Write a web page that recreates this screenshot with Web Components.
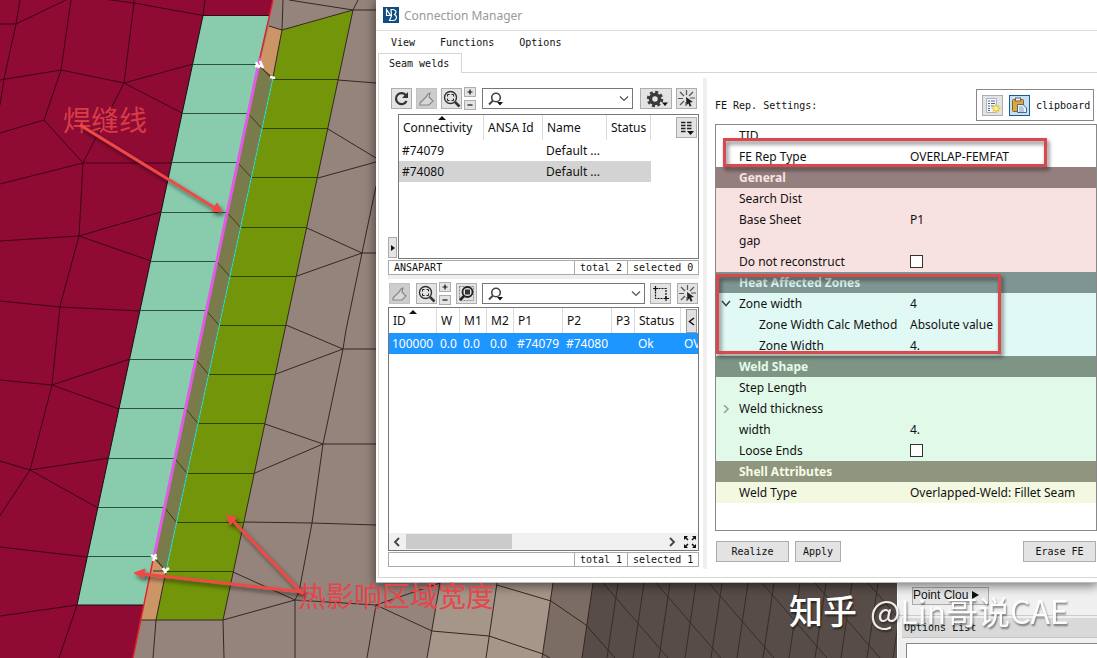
<!DOCTYPE html>
<html lang="en">
<head>
<meta charset="utf-8">
<title>Connection Manager</title>
<style>
html,body{height:100%}
body{margin:0;overflow:hidden;background:#94847b;font-family:"Noto Sans","Noto Sans CJK SC",sans-serif;font-size:12px;color:#111}
</style>
</head>
<body>
<app-desktop></app-desktop>

<template id="t-desktop">
<style>
:host{display:block;position:relative;height:100%;overflow:hidden}
mesh-view{position:absolute;inset:0}
side-panel{position:absolute;left:897px;right:0;bottom:0;height:80px}
connection-window{position:absolute;left:376px;right:0;top:0;bottom:75px}
weld-notes{position:absolute;inset:0;pointer-events:none}
water-mark{position:absolute;left:789px;bottom:24px}
</style>
<mesh-view></mesh-view>
<side-panel></side-panel>
<connection-window></connection-window>
<weld-notes></weld-notes>
<water-mark></water-mark>
</template>

<template id="t-mesh">
<style>:host{display:block}svg{display:block;width:100%;height:100%}</style>
<svg viewBox="0 0 1097 658" preserveAspectRatio="xMinYMin slice" aria-hidden="true">
<rect width="1097" height="658" fill="#94847b"/>
<path fill="#8f0b34" d="M0 0H273L133 658H0Z"/>
<path fill="#a69589" d="M440 583H553L542 658H427Z"/>
<path fill="#7b6c64" d="M553 583H593L582 658H542Z"/>
<path fill="#574c47" d="M593 583H900V658H582Z"/>
<path fill="#89ccad" d="M203 15.500H269.500L144 605H77Z"/>
<path fill="#7a7b4b" d="M259 65L273 78L166 571L153 557Z"/>
<path fill="#cb9566" d="M269 26L282 30L273 77L259 66ZM153 558L166 571L156 620H140.500Z"/>
<path fill="#73950a" d="M282 30L353 10L223 620H156L273 78Z"/>
<path fill="none" stroke="#3c0418" d="M20 0L16 24L4 79L0 105M0 24H16L70-2M71 0L61 70L44 120L83 163M134 3L124 83L83 163M134 0V3M88-3L134 3L203 15.500H269M205 0L203 15.500M0 80L61 70L124 83L193 64M124 83L182 113M0 133L44 120M0 184L83 163H172M83 163L79 236L60 306L52 385L30 470L-3 520M0 241L79 236L161 212M79 236L151 261M0 301L60 307L140 311M0 380L52 385L130 359M52 385L119 409M0 461L30 470L109 458M30 470L98 508M0 547L87 557M0 616L77 605L59 658"/>
<path fill="none" stroke="#111" d="M203 15.500L77 605H144"/>
<path id="teal" fill="none" stroke="#28513f"/>
<path id="olive" fill="none" stroke="#3a3d1e"/>
<path id="green" fill="none" stroke="#2c4400"/>
<path fill="none" stroke="#352822" d="M283 0L282 30L353 10H376M289 0L353 10L358 0M269 26L282 30L273 77M353 10L223 620M338 80L376 83M328 129L376 158M318 178L376 162M376 186L362 253L346 330L343 349L323 444L312 523L299 592L295 600V658M307 228L362 253H376M297 276L362 253M286 325L343 349H376M276 374L343 349M265 424L323 444H376M255 473L323 444M244 522L312 523L376 525M233 572L295 600L376 605M223 620L295 600M223 620L224 658M166 571L156 620L153 658M141 620H223M376 605L367 658M376 605L440 583L427 658M376 605L432 631L489 636L543 654L550 658M497 583L486 658M553 583L542 658M593 583L582 658M497 585L551 601L586 625L615 658M153 571H166"/>
<path id="dark" fill="none" stroke="#382d28"/>
<path stroke="#e6202a" fill="none" stroke-width="1.400" d="M273 0L258 66M153 560L133 658"/>
<path stroke="#3fd9b4" fill="none" stroke-width="1.200" d="M273 78L166 571"/>
<path stroke="#e25be6" fill="none" stroke-width="3" d="M260 58L154 557"/>
<path stroke="#fff" stroke-width="2.500" fill="none" d="M256 62L259 68M260 61L263 68M255 66H262M270 77L275 78M151 555L157 559M156 554L153 561M163 568L166 573M169 568L164 572"/>
</svg>
</template>

<template id="t-notes">
<style>
:host{display:block}svg{display:block;width:100%;height:100%}
text{font:28px "Noto Sans CJK SC",sans-serif;fill:#e5454b}
</style>
<svg viewBox="0 0 1097 658" preserveAspectRatio="xMinYMin slice">
<defs><filter id="sh" x="-20%" y="-20%" width="140%" height="140%"><feDropShadow dx="2" dy="3" stdDeviation="2" flood-opacity=".55"/></filter></defs>
<text x="63" y="131" fill-opacity=".85">焊缝线</text>
<text x="298" y="607">热影响区域宽度</text>
<g filter="url(#sh)" fill="#ee4a46" stroke="#ee4a46">
<path stroke-width="3" d="M80 125L215 208"/><path d="M222 212L212 211L217 203Z"/>
<path stroke-width="3" d="M303 594L234 522"/><path d="M227 515L237 518L230 525Z"/>
<path stroke-width="3" d="M303 592L143 574"/><path d="M134 573L145 569L144 578Z"/>
</g>
<g filter="url(#sh)" fill="none" stroke="#d9484b" stroke-width="3"><rect x="724.500" y="139.500" width="321" height="26"/><rect x="717.500" y="275.500" width="282" height="77"/></g>
</svg>
</template>

<template id="t-water">
<style>
:host{display:flex;align-items:center;gap:13px;height:48px;font-family:"Noto Sans CJK SC",sans-serif;color:#fff;white-space:nowrap;text-shadow:1px 2px 2px rgba(0,0,0,.5);line-height:48px;pointer-events:none}
b{font-size:34px;font-weight:500}span{font-size:32px;font-weight:400;opacity:.9}
</style>
<b>知乎</b><span>@Lin哥说CAE</span>
</template>

<template id="t-side">
<style>
:host{display:flex;flex-direction:column;box-sizing:border-box;background:#f0f0f0;padding-top:9px;border-left:1px solid #fff;font-family:"DejaVu Sans Mono",monospace;font-size:10px}
.tools{padding-left:14px;height:28px;border-bottom:1px solid #ccc}
button{display:flex;align-items:center;gap:4px;width:77px;height:18px;padding:0 0 2px 0;border:1px solid #aaa;background:#e6e6e6;font:12px "Liberation Sans",sans-serif;white-space:nowrap;color:#111}
h2{margin:2px 0 5px 4px;padding-left:2px;height:19px;font:inherit;line-height:20px;background:#d9d9d9;border-bottom:1px solid #c4c4c4}
.list{flex:1;margin-left:8px;background:#fff;border:solid #888;border-width:1px 0 0 1px}
i{border:4px solid transparent;border-left:7px solid #111;border-right:0}
</style>
<div class="tools"><button type="button">Point Clou<i></i></button></div>
<h2>Options List</h2>
<div class="list"></div>
</template>

<template id="t-toolbtn">
<style>
:host{display:block;flex:none;width:21px;height:21px}
:host([wide]){width:32px}
:host([small]){width:12px;height:10px}
button{display:flex;align-items:center;justify-content:center;box-sizing:border-box;width:100%;height:100%;padding:0;border:1px solid #adadad;background:#e3e3e3}
:host([off]) button{background:#cdcdcd;border-color:#c2c2c2}
:host([active]) button{background:#c5e0f5;border:1px solid #1b5c8c}
::slotted(svg){display:block;flex:none}
</style>
<button type="button"><slot></slot></button>
</template>

<template id="t-stack">
<style>:host{display:flex;flex-direction:column;gap:3px;flex:none}</style>
<tool-button small><svg width="8" height="8"><path d="M1.500 4H6.500M4 1.500V6.500" stroke="#111" stroke-width="1.200"/></svg></tool-button>
<tool-button small><svg width="8" height="8"><path d="M1.500 4H6.500" stroke="#111" stroke-width="1.200"/></svg></tool-button>
</template>

<template id="t-search">
<style>
:host{display:flex;align-items:center;flex:1;min-width:0;box-sizing:border-box;height:21px;border:1px solid #777;background:#fff;padding:0 3px 0 5px}
input{flex:1;min-width:0;border:0;outline:0;padding:0;font:inherit;background:none}
button{border:0;background:none;padding:0;display:flex}
</style>
<svg width="17" height="16" fill="none"><circle cx="8" cy="6.500" r="4.300" stroke="#444" stroke-width="1.600"/><path d="M5 9.500L1 13.500" stroke="#444" stroke-width="2"/><path d="M9 11H15L12 14.500Z" fill="#111"/></svg>
<input type="text" aria-label="Search">
<button type="button" aria-label="Search history"><svg width="10" height="8"><path d="M1 1.500L5 5.500L9 1.500" fill="none" stroke="#555" stroke-width="1.200"/></svg></button>
</template>

<template id="t-status">
<style>
:host{display:grid;grid-template-columns:1fr 53px 71px;flex:none;height:15px;box-sizing:border-box;border:solid #aaa;border-width:1px 1px 1px 0;font-family:"DejaVu Sans Mono",monospace;font-size:10px;line-height:14px;white-space:pre}
::slotted(span){border-left:1px solid #aaa;padding-left:5px}
</style>
<slot></slot>
</template>

<template id="t-conn">
<style>
:host{display:flex;align-items:stretch;flex:none;height:145px}
.rail{width:10px;flex:none;display:flex;align-items:flex-end}
.rail button{display:flex;align-items:center;justify-content:center;width:9px;height:21px;margin-bottom:1px;padding:0;border:1px solid #aaa;background:#e4e4e4}
.rail i{border:3px solid transparent;border-left:4px solid #111;border-right:0}
.box{position:relative;flex:1;border:1px solid #777;background:#fff}
table{table-layout:fixed;border-collapse:collapse;width:252px}
th,td{height:21px;padding:0 0 0 3px;text-align:left;font-weight:400;white-space:nowrap;overflow:hidden;line-height:20px}
th{height:25px;padding-left:4px;box-shadow:inset -1px 0 #dcdcdc}
tr.sel{background:#d3d3d3}
.sort{position:absolute;left:39px;top:1px;border:4px solid transparent;border-bottom:4px solid #111;border-top:0}
tool-button{position:absolute;right:1px;top:2px}
</style>
<div class="rail"><button type="button" aria-label="Expand"><i></i></button></div>
<div class="box">
<table><colgroup><col width="85"><col width="59"><col width="64"><col width="44"></colgroup>
<thead><tr><th>Connectivity</th><th>ANSA Id</th><th>Name</th><th>Status</th></tr></thead>
<tbody><tr><td>#74079</td><td></td><td>Default ...</td><td></td></tr><tr class="sel"><td>#74080</td><td></td><td>Default ...</td><td></td></tr></tbody></table>
<i class="sort"></i>
<tool-button><svg width="17" height="17"><path d="M3 3.500H7.500M3 6.500H7.500M3 9.500H7.500M3 12.500H7.500M9 3.500H13.500M9 6.500H13.500M9 9.500H13.500" stroke="#222" stroke-width="1.400"/><path d="M9 12H16L12.500 16Z" fill="#111"/></svg></tool-button>
</div>
</template>

<template id="t-weld">
<style>
:host{display:flex;flex-direction:column;position:relative;flex:1;min-height:100px;box-sizing:border-box;border:1px solid #777;background:#fff;overflow:hidden}
.view{flex:1;overflow:hidden;min-height:0}
table{table-layout:fixed;border-collapse:collapse;width:361px}
th,td{height:21px;padding:0 0 0 3px;text-align:left;font-weight:400;white-space:nowrap;line-height:20px}
th{height:25px;padding-left:4px;box-shadow:inset -1px 0 #dcdcdc}
tbody{background:#1e96ff;color:#fff}
.sort{position:absolute;left:20px;top:2px;border:4px solid transparent;border-bottom:4px solid #111;border-top:0}
.less{position:absolute;right:1px;top:1px;width:11px;height:24px;padding:0;border:1px solid #999;background:#e0e0e0;display:flex;align-items:center;justify-content:center}
.bar{display:flex;align-items:center;height:17px;background:#f0f0f0;flex:none;padding:0 1px 0 3px}
.thumb{width:106px;height:15px;background:#cbcbcb;margin-left:5px}
.gap{flex:1}
svg{display:block}
.full{margin-left:6px}
</style>
<div class="view"><table><colgroup><col width="48"><col width="23"><col width="27"><col width="27"><col width="49"><col width="49"><col width="23"><col width="46"><col width="69"></colgroup>
<thead><tr><th>ID</th><th>W</th><th>M1</th><th>M2</th><th>P1</th><th>P2</th><th>P3</th><th>Status</th><th></th></tr></thead>
<tbody><tr><td>100000</td><td>0.0</td><td>0.0</td><td>0.0</td><td>#74079</td><td>#74080</td><td></td><td>Ok</td><td>OV</td></tr></tbody></table></div>
<i class="sort"></i>
<button class="less" type="button" aria-label="Columns"><svg width="7" height="9"><path d="M6 1L1.500 4.500L6 8" fill="none" stroke="#111" stroke-width="1.500"/></svg></button>
<div class="bar"><svg width="9" height="10"><path d="M7 1L3 5L7 9" fill="none" stroke="#444" stroke-width="1.800"/></svg><span class="thumb"></span><span class="gap"></span><svg width="9" height="10"><path d="M2 1L6 5L2 9" fill="none" stroke="#444" stroke-width="1.800"/></svg><svg class="full" width="14" height="14"><path d="M1 1H5L1 5ZM9 1H13V5ZM1 9V13H5ZM13 9V13H9Z" fill="#111"/><path d="M2 2L5 5M12 2L9 5M2 12L5 9M12 12L9 9" stroke="#111" stroke-width="1.500"/></svg></div>
</template>

<template id="t-prop">
<style>
:host{display:block;flex:1;min-height:0;box-sizing:border-box;border:1px solid #888;background:#fff;overflow:hidden}
table{table-layout:fixed;border-collapse:collapse;width:100%}
th,td{height:21px;padding:0;text-align:left;font-weight:400;line-height:20px;white-space:nowrap}
th{padding-left:23px;position:relative}
tr.sub th{padding-left:43px}
tbody.g1{background:#f8e1e1}tbody.g2{background:#e0f9f5}tbody.g3{background:#e1f9e8}tbody.g4{background:#f3f8e1}
tr.head th{font-weight:700}
.g1 .head{background:#957e7e;color:#fbe4e4}.g2 .head{background:#7e9591;color:#d8f2ee}.g3 .head{background:#7e9585;color:#e4fbea}.g4 .head{background:#8f957e;color:#f6fbe4}
input{appearance:none;display:block;width:13px;height:13px;margin:0;border:1px solid #333;background:#fff}
th svg{position:absolute;left:5px;top:7px}
</style>
<table><colgroup><col width="194"><col></colgroup>
<tbody><tr><th>TID</th><td></td></tr><tr><th>FE Rep Type</th><td>OVERLAP-FEMFAT</td></tr></tbody>
<tbody class="g1"><tr class="head"><th colspan="2">General</th></tr><tr><th>Search Dist</th><td></td></tr><tr><th>Base Sheet</th><td>P1</td></tr><tr><th>gap</th><td></td></tr><tr><th><label for="nr">Do not reconstruct</label></th><td><input type="checkbox" id="nr"></td></tr></tbody>
<tbody class="g2"><tr class="head"><th colspan="2">Heat Affected Zones</th></tr><tr><th><svg width="10" height="8"><path d="M1 1L5 5.500L9 1" fill="none" stroke="#444" stroke-width="1.500"/></svg>Zone width</th><td>4</td></tr><tr class="sub"><th>Zone Width Calc Method</th><td>Absolute value</td></tr><tr class="sub"><th>Zone Width</th><td>4.</td></tr></tbody>
<tbody class="g3"><tr class="head"><th colspan="2">Weld Shape</th></tr><tr><th>Step Length</th><td></td></tr><tr><th><svg width="10" height="8"><path d="M3 0L7 4L3 8" fill="none" stroke="#999" stroke-width="1.500"/></svg>Weld thickness</th><td></td></tr><tr><th>width</th><td>4.</td></tr><tr><th><label for="le">Loose Ends</label></th><td><input type="checkbox" id="le"></td></tr></tbody>
<tbody class="g4"><tr class="head"><th colspan="2">Shell Attributes</th></tr><tr><th>Weld Type</th><td>Overlapped-Weld: Fillet Seam</td></tr></tbody>
</table>
</template>

<template id="t-window">
<style>
:host{display:flex;flex-direction:column;box-sizing:border-box;background:#fff;border-bottom:1px solid #bbb;box-shadow:0 2px 10px 1px rgba(0,0,0,.5)}
.title{display:flex;align-items:center;gap:5px;height:30px;padding-left:7px;border-bottom:1px solid #ddd;font-size:12px;color:#999;flex:none}
.mono,nav,.tabs,.acts button{font-family:"DejaVu Sans Mono",monospace;font-size:10px}
nav{display:flex;gap:25px;height:22px;padding-left:15px;flex:none}
nav button,.tabs button{border:0;background:none;padding:0;font:inherit;color:#111}
.tabs{display:flex;height:20px;flex:none;margin-left:2px}
.tabs button{width:84px;border:1px solid #d5d5d5;border-bottom:0;text-align:left;padding-left:10px}
.tabs span{flex:1;border-bottom:1px solid #d5d5d5}
.pane{display:flex;flex:1;min-height:0;margin:0 0 4px 2px;border:1px solid #d5d5d5;border-width:0 0 1px 1px}
.left{display:flex;flex-direction:column;flex:none;width:311px;padding:15px 0 10px 9px}
.row{display:flex;align-items:center;height:21px;flex:none}
.r1{gap:4px;padding:0 2px 0 3px;margin-bottom:5px}
.r2{gap:6px;padding:0 1px;margin:4px 0 3px}
.r1 zoom-stack{margin:0 2px 0 -2px}
.r1 search-box{margin-right:3px}
.r2 zoom-stack{margin:0 -1px 0 -4px}
.r2 search-box{margin:0 -1px}
status-strip{margin-top:1px}
.hsplit{height:4px;background:#efefef;flex:none}
.vsplit{width:4px;margin:5px 0 8px 4px;background:#efefef;flex:none}
.right{display:flex;flex-direction:column;flex:1;min-width:0;padding:16px 0 15px 8px}
.rh{display:flex;align-items:center;justify-content:space-between;height:32px;margin-bottom:3px;padding-right:3px;flex:none}
.clip{display:flex;align-items:center;gap:6px;box-sizing:border-box;width:118px;height:32px;padding-left:5px;border:1px solid #888}
.acts{display:flex;gap:6px;height:21px;margin:10px 1px 0 1px;flex:none}
.acts button{border:1px solid #adadad;background:#e3e3e3;padding:0;width:73px;color:#111}
.acts .ap{width:46px}.acts .er{margin-left:auto}
</style>
<header class="title"><svg width="16" height="16"><rect width="16" height="16" fill="#0f4c81"/><path d="M3.500 2.500V8.500H7.500ZM8 2.500H10Q13 3 13 5Q13 7 11 7.500Q13.500 8 13.500 10.500Q13 13.500 10 13.500H6.500L8.500 9Z" fill="none" stroke="#fff" stroke-width="1.200"/></svg><span>Connection Manager</span></header>
<nav><button type="button">View</button><button type="button">Functions</button><button type="button">Options</button></nav>
<div class="tabs"><button type="button">Seam welds</button><span></span></div>
<div class="pane">
<section class="left">
<div class="row r1">
<tool-button><svg width="17" height="17"><path d="M13 5.500A5.500 5.500 0 1 0 13.500 11" fill="none" stroke="#333" stroke-width="2.200"/><path d="M15 2V8H9Z" fill="#333"/></svg></tool-button>
<tool-button off><svg width="17" height="17"><path d="M2 15V13L8 7L10 4L12 3L11 7L15 11L11 15Z" fill="#d8d8d8" stroke="#888" stroke-width="1.200"/></svg></tool-button>
<tool-button><svg width="18" height="18"><circle cx="7.500" cy="7.500" r="6" fill="none" stroke="#333" stroke-width="1.400"/><path d="M12 12L16.500 16.500" stroke="#333" stroke-width="2.500"/><path d="M4.500 6.500V4.500H6.500M8.500 4.500H10.500V6.500M10.500 8.500V10.500H8.500M6.500 10.500H4.500V8.500" fill="none" stroke="#222"/></svg></tool-button>
<zoom-stack></zoom-stack>
<search-box></search-box>
<tool-button wide><svg width="26" height="18"><circle cx="12" cy="9" r="4.500" fill="none" stroke="#3a3a3a" stroke-width="3.500"/><circle cx="12" cy="9" r="7" fill="none" stroke="#3a3a3a" stroke-width="2.500" stroke-dasharray="3 2.500"/><path d="M19 12.500H25L22 16Z" fill="#111"/></svg></tool-button>
<tool-button><svg width="17" height="17"><path d="M8.500 0V5M2 2L6 6M15 2L11 6M0 8.500H5M12 8H17M2 15L6 11M8 12V16" stroke="#555" stroke-width="1.200"/><path d="M8 7L15 12L12 12.500L13.500 16L11.500 16.500L10.500 13.500L8.500 15Z" fill="#222"/></svg></tool-button>
</div>
<connectivity-table></connectivity-table>
<status-strip><span>ANSAPART</span><span>total 2</span><span>selected 0</span></status-strip>
<div class="hsplit"></div>
<div class="row r2">
<tool-button off><svg width="17" height="17"><path d="M2 15V13L8 7L10 4L12 3L11 7L15 11L11 15Z" fill="#d8d8d8" stroke="#888" stroke-width="1.200"/></svg></tool-button>
<tool-button><svg width="18" height="18"><circle cx="7.500" cy="7.500" r="6" fill="none" stroke="#333" stroke-width="1.400"/><path d="M12 12L16.500 16.500" stroke="#333" stroke-width="2.500"/><path d="M4.500 6.500V4.500H6.500M8.500 4.500H10.500V6.500M10.500 8.500V10.500H8.500M6.500 10.500H4.500V8.500" fill="none" stroke="#222"/></svg></tool-button>
<zoom-stack></zoom-stack>
<tool-button><svg width="17" height="17"><path d="M1.500 1.500H15.500V15.500H1.500Z" fill="none" stroke="#888" stroke-dasharray="2 1"/><circle cx="9.500" cy="7" r="5" fill="#e3e3e3" stroke="#222" stroke-width="1.800"/><rect x="7" y="4.500" width="5" height="5" fill="#333"/><path d="M6 11L2 15" stroke="#222" stroke-width="2.500"/></svg></tool-button>
<search-box></search-box>
<tool-button><svg width="17" height="17"><path d="M3.500 3.500H14V13.500H3.500Z" fill="none" stroke="#111" stroke-width="1.200" stroke-dasharray="2 1"/><path d="M1 3.500H6M3.500 1V6M12 13.500H17M14 11V16" stroke="#111" stroke-width="1.200"/></svg></tool-button>
<tool-button><svg width="17" height="17"><path d="M8.500 0V5M2 2L6 6M15 2L11 6M0 8.500H5M12 8H17M2 15L6 11M8 12V16" stroke="#555" stroke-width="1.200"/><path d="M8 7L15 12L12 12.500L13.500 16L11.500 16.500L10.500 13.500L8.500 15Z" fill="#222"/></svg></tool-button>
</div>
<weld-table></weld-table>
<status-strip><span></span><span>total 1</span><span>selected 1</span></status-strip>
</section>
<div class="vsplit"></div>
<section class="right">
<div class="rh"><span class="mono">FE Rep. Settings:</span>
<div class="clip"><tool-button><svg width="17" height="17"><path d="M2.500 1.500H12.500V15.500H2.500Z" fill="#f7f9fc" stroke="#a8b4c0"/><path d="M4 4H6M7 4H11M4 6.500H6M7 6.500H11M4 9H6M7 9H10M4 11.500H6M4 13.500H6" stroke="#44679a"/><path d="M12 7V16M7.500 11.500H16.500M9 8.500L15 14.500M15 8.500L9 14.500" stroke="#e6c63b" stroke-width="1.600"/><circle cx="12" cy="11.500" r="2" fill="#fff3a0"/></svg></tool-button>
<tool-button active><svg width="17" height="17"><rect x="1.500" y="2.500" width="11" height="12" rx="1" fill="#dca83a" stroke="#8a6418"/><rect x="4.500" y="1" width="5" height="3" fill="#eee" stroke="#666"/><path d="M6.500 7.500H12L15.500 11V15.500H6.500Z" fill="#eef4fb" stroke="#4a6688"/><path d="M8 10H12M8 12H13M8 14H13" stroke="#7f9cc0"/></svg></tool-button><span class="mono">clipboard</span></div></div>
<property-table></property-table>
<div class="acts"><button type="button">Realize</button><button type="button" class="ap">Apply</button><button type="button" class="er">Erase FE</button></div>
</section>
</div>
</template>

<script>
class Base extends HTMLElement{
  constructor(){
    super();
    this.attachShadow({mode:'open'}).append(document.getElementById(this.constructor.tpl).content.cloneNode(true));
  }
}
const define=(name,tpl)=>customElements.define(name,class extends Base{static tpl=tpl});

// Mesh viewport: the repeated element edges of the weld strips are computed per row.
class MeshView extends Base{
  static tpl='t-mesh';
  connectedCallback(){
    const at=(x,y,x2,y2,v)=>x+(v-y)*(x2-x)/(y2-y);
    const pink=y=>at(258,66,154,557,y),cyan=y=>at(273,78,166,571,y);
    let teal='',olive='M259 66L273 78L166 571L153 557',green='',dark='';
    for(let i=0;i<11;i++){
      const y=Math.round(64+i*49.2)+.5,g=y+15;
      teal+=`M${at(203,15,77,605,y)} ${y}H${pink(y)}`;
      olive+=`M${pink(y)} ${y}L${cyan(g)} ${g}`;
      green+=`M${cyan(g)} ${g}H${at(353,10,223,620,g)}`;
    }
    for(let x=618;x<915;x+=26)dark+=`M${x} 583L${x-11} 658`;
    for(let x=603;x<900;x+=53)dark+=`M${x} 583L${x+65} 658`;
    const set=(id,d)=>this.shadowRoot.getElementById(id).setAttribute('d',d);
    set('teal',teal);set('olive',olive);set('green',green);set('dark',dark);
  }
}
customElements.define('mesh-view',MeshView);
define('weld-notes','t-notes');
define('water-mark','t-water');
define('side-panel','t-side');
define('tool-button','t-toolbtn');
define('zoom-stack','t-stack');
define('search-box','t-search');
define('status-strip','t-status');
define('connectivity-table','t-conn');
define('weld-table','t-weld');
define('property-table','t-prop');
define('connection-window','t-window');
define('app-desktop','t-desktop');
</script>
</body>
</html>
